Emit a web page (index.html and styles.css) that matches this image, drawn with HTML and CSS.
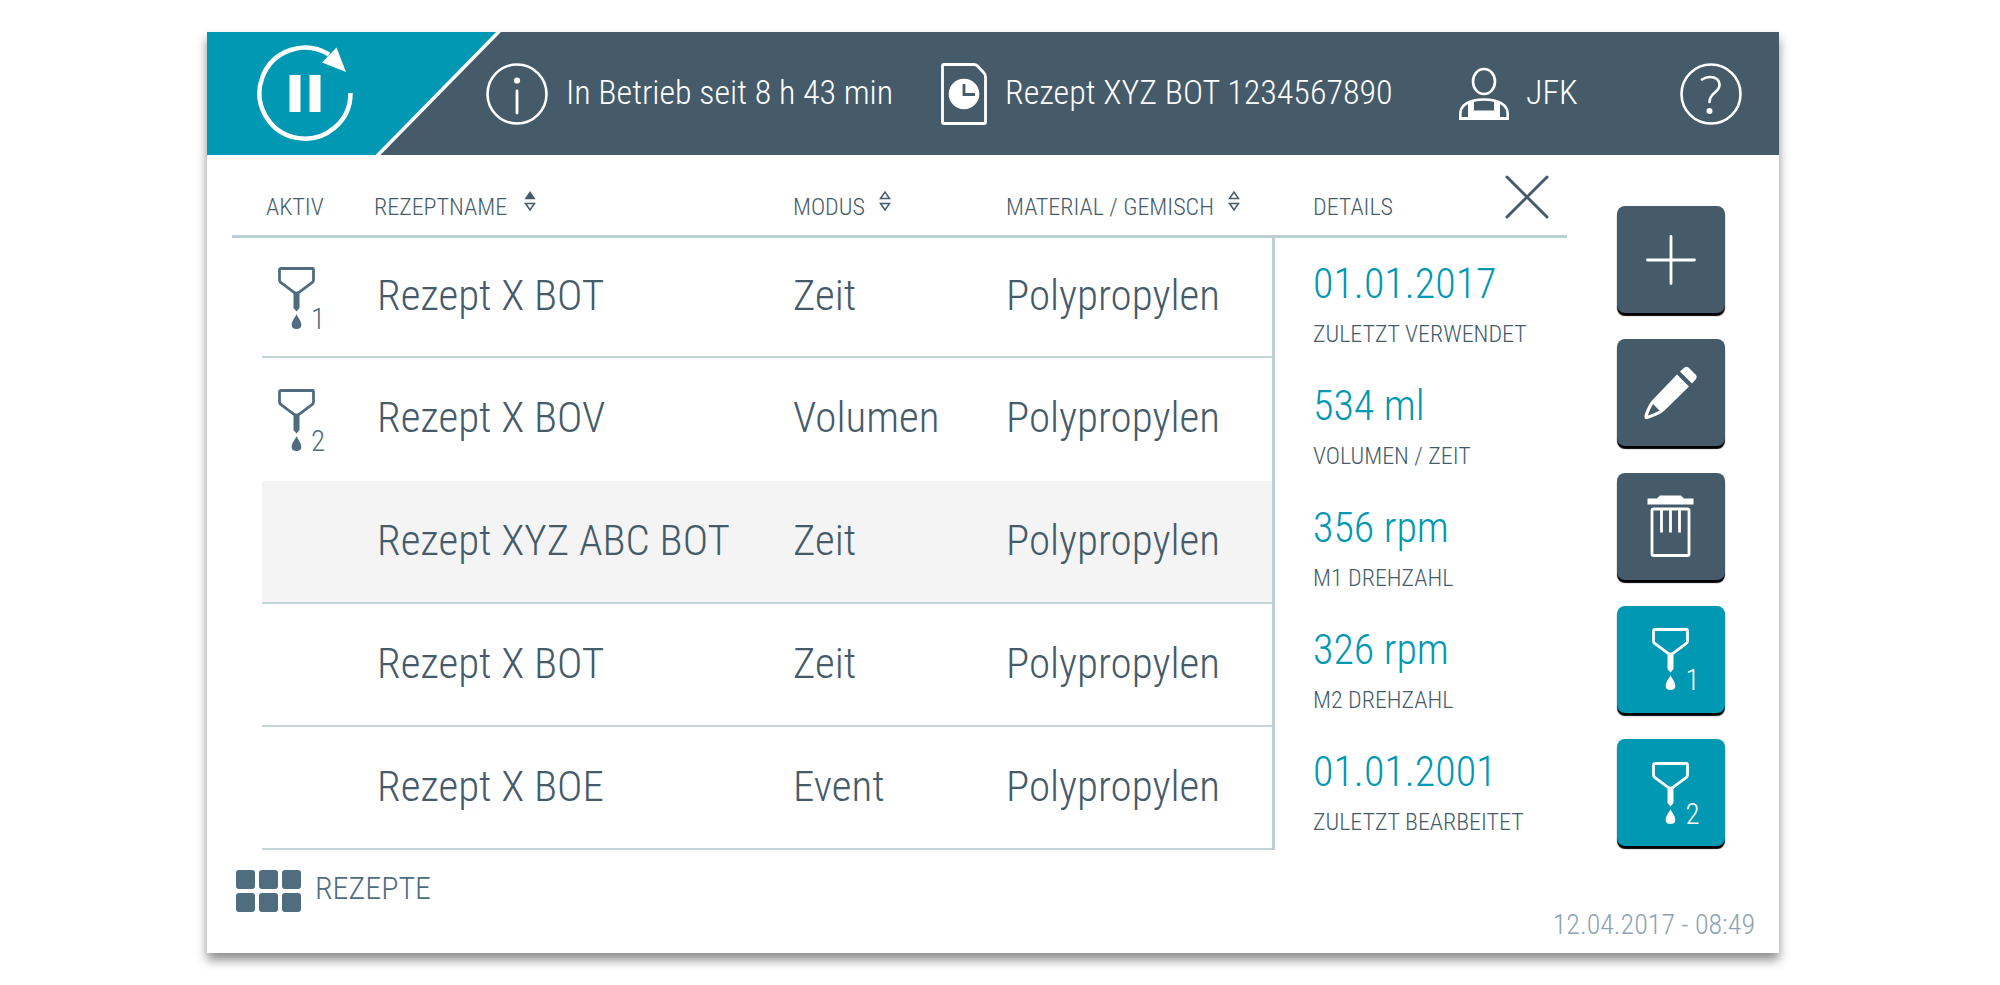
FILE: index.html
```html
<!DOCTYPE html>
<html lang="de">
<head>
<meta charset="utf-8">
<title>Rezepte</title>
<link rel="stylesheet" href="styles.css">
</head>
<body>
<svg class="defs" aria-hidden="true">
  <symbol id="funnel" viewBox="0 0 38 62">
    <path d="M3.500 1.500H34.500Q35.500 1.500 35.500 2.500V13Q35.500 14.500 34.300 15.500L21 25.300Q18.500 26.800 16 25.300L2.700 15.500Q1.500 14.500 1.500 13V3Q1.500 1.500 3.500 1.500Z" fill="none" stroke="currentColor" stroke-width="2.800"/>
    <path d="M15.500 25H21.500V41L18.500 44.500L15.500 41Z" fill="currentColor"/>
    <path d="M18.500 47C20 51 23.300 53.500 23.300 58Q23.300 62 18.500 62T13.700 58C13.700 53.500 17 51 18.500 47Z" fill="currentColor"/>
  </symbol>
  <symbol id="sort" viewBox="0 0 12 22">
    <path d="M1.500 8.500L6 2L10.500 8.500Z" fill="none" stroke="currentColor" stroke-width="1.500"/>
    <path d="M1.500 13.500L6 20L10.500 13.500Z" fill="none" stroke="currentColor" stroke-width="1.500"/>
  </symbol>
  <symbol id="sort-up" viewBox="0 0 12 22">
    <path d="M0.500 9.300L6 1L11.500 9.300Z" fill="currentColor"/>
    <path d="M1.500 13.500L6 20L10.500 13.500Z" fill="none" stroke="currentColor" stroke-width="1.500"/>
  </symbol>
</svg>
<div class="panel">
  <header class="topbar">
    <button class="run" aria-label="Pause">
      <svg class="run-shape" viewBox="0 0 294 123"><path d="M0 0H290L169 123H0Z" fill="#0098b2"/><path d="M292.500 -1L170 124" stroke="#fff" stroke-width="3.500"/></svg>
      <svg class="run-icon" viewBox="0 0 96 96"><path d="M93.500 48A45.500 45.500 0 1 1 72 9.500" fill="none" stroke="#fff" stroke-width="4.500"/><path d="M79.500 2.500L89 27L65 17.500Z" fill="#fff"/><path d="M32.500 30h11v37h-11zM52.500 30h11v37h-11z" fill="#fff"/></svg>
    </button>
    <div class="status status-time">
      <svg width="62" height="62" viewBox="0 0 62 62"><circle cx="31" cy="31" r="29.500" fill="none" stroke="#fff" stroke-width="2.600"/><circle cx="31" cy="17.500" r="3.100" fill="#fff"/><path d="M31 28V50" stroke="#fff" stroke-width="2.800" stroke-linecap="round"/></svg>
      <span>In Betrieb seit 8 h 43 min</span>
    </div>
    <div class="status status-recipe">
      <svg width="46" height="62" viewBox="0 0 46 62"><path d="M3 1.500H33Q35 1.500 36.500 3L43 10Q44.500 11.500 44.500 14V59Q44.500 60.500 43 60.500H3Q1.500 60.500 1.500 59V3Q1.500 1.500 3 1.500Z" fill="none" stroke="#fff" stroke-width="2.800"/><circle cx="23" cy="31" r="15.300" fill="#fff"/><path d="M23 21V31.500H34" fill="none" stroke="#455b69" stroke-width="2.800"/></svg>
      <span>Rezept XYZ BOT 1234567890</span>
    </div>
    <div class="status status-user">
      <svg width="50" height="54" viewBox="0 0 50 54"><ellipse cx="25" cy="14.500" rx="11" ry="12.500" fill="none" stroke="#fff" stroke-width="2.600"/><path d="M1.300 51.700V47C1.300 38 10 32.500 25 32.500S48.700 38 48.700 47V51.700Z" fill="none" stroke="#fff" stroke-width="2.600"/><path d="M9 35.500L15 33V43.500H35V33L41 35.500V50H47V53H3V50H9Z" fill="#fff"/></svg>
      <span>JFK</span>
    </div>
    <button class="help" aria-label="Hilfe">
      <svg width="62" height="62" viewBox="0 0 62 62"><circle cx="31" cy="31" r="29.500" fill="none" stroke="#fff" stroke-width="2.600"/><path d="M22 16.500Q25.500 14 30 14C36 14 39.500 17 39.500 22C39.500 30 29.500 29 29.500 39" fill="none" stroke="#fff" stroke-width="2.600" stroke-linecap="round"/><circle cx="29.500" cy="48" r="3" fill="#fff"/></svg>
    </button>
  </header>

  <main class="content">
    <table class="recipes">
      <colgroup><col class="c-active"><col class="c-name"><col class="c-mode"><col class="c-material"></colgroup>
      <thead>
        <tr>
          <th>AKTIV</th>
          <th><button class="sort sort-name">REZEPTNAME <svg><use href="#sort-up"/></svg></button></th>
          <th><button class="sort">MODUS <svg><use href="#sort"/></svg></button></th>
          <th><button class="sort">MATERIAL / GEMISCH <svg><use href="#sort"/></svg></button></th>
        </tr>
      </thead>
      <tbody>
        <tr><td><span class="pump"><svg><use href="#funnel"/></svg><span>1</span></span></td><td>Rezept X BOT</td><td>Zeit</td><td>Polypropylen</td></tr>
        <tr><td><span class="pump"><svg><use href="#funnel"/></svg><span>2</span></span></td><td>Rezept X BOV</td><td>Volumen</td><td>Polypropylen</td></tr>
        <tr class="selected"><td></td><td>Rezept XYZ ABC BOT</td><td>Zeit</td><td>Polypropylen</td></tr>
        <tr><td></td><td>Rezept X BOT</td><td>Zeit</td><td>Polypropylen</td></tr>
        <tr><td></td><td>Rezept X BOE</td><td>Event</td><td>Polypropylen</td></tr>
      </tbody>
    </table>

    <section class="details">
      <div class="details-head">
        <h2>DETAILS</h2>
        <button class="close" aria-label="Schließen"><svg width="44" height="44" viewBox="0 0 44 44"><path d="M2 2L42 42M42 2L2 42" stroke="#455b69" stroke-width="3" stroke-linecap="round"/></svg></button>
      </div>
      <dl>
        <div><dd>01.01.2017</dd><dt>ZULETZT VERWENDET</dt></div>
        <div><dd>534 ml</dd><dt>VOLUMEN / ZEIT</dt></div>
        <div><dd>356 rpm</dd><dt>M1 DREHZAHL</dt></div>
        <div><dd>326 rpm</dd><dt>M2 DREHZAHL</dt></div>
        <div><dd>01.01.2001</dd><dt>ZULETZT BEARBEITET</dt></div>
      </dl>
    </section>

    <nav class="actions">
      <button aria-label="Hinzufügen"><svg width="50" height="50" viewBox="0 0 50 50"><path d="M25 1.500V48.500M1.500 25H48.500" stroke="#fff" stroke-width="2.800" stroke-linecap="round"/></svg></button>
      <button aria-label="Bearbeiten"><svg width="54" height="54" viewBox="0 0 54 54"><path d="M36 5.500L40.500 1.500Q42.500 0 44.500 1.500L52 9Q53.500 11 52 13L48 17.500ZM33 8.500L45 20.500L20.500 44.500C17 48 7 52 3 53Q0 53.500 0.500 49.500C1.500 46 4.500 38.500 8 34.500ZM9 38Q5.500 44 3.800 49.500Q9 48 15.500 44.500Z" fill="#fff" fill-rule="evenodd"/></svg></button>
      <button aria-label="Löschen"><svg width="48" height="62" viewBox="0 0 48 62"><path d="M0.500 3.500H10L13 0.500H34L37 3.500H46.500V9.500H0.500Z" fill="#fff"/><rect x="5" y="14" width="37" height="46.500" rx="1.500" fill="none" stroke="#fff" stroke-width="2.800"/><path d="M14.500 14V37.500M23.500 14V37.500M32.500 14V37.500" stroke="#fff" stroke-width="2.800"/></svg></button>
      <button class="primary" aria-label="Pumpe 1"><span class="pump"><svg><use href="#funnel"/></svg><span>1</span></span></button>
      <button class="primary" aria-label="Pumpe 2"><span class="pump"><svg><use href="#funnel"/></svg><span>2</span></span></button>
    </nav>
  </main>

  <footer class="bottombar">
    <button class="menu">
      <svg width="65" height="42" viewBox="0 0 65 42" fill="#506d80"><rect width="19" height="19" rx="3"/><rect x="23" width="19" height="19" rx="3"/><rect x="46" width="19" height="19" rx="3"/><rect y="23" width="19" height="19" rx="3"/><rect x="23" y="23" width="19" height="19" rx="3"/><rect x="46" y="23" width="19" height="19" rx="3"/></svg>
      <span>REZEPTE</span>
    </button>
    <time datetime="2017-04-12T08:49">12.04.2017 - 08:49</time>
  </footer>
</div>
</body>
</html>
```
FILE: styles.css
```css
* { box-sizing: border-box; }
body {
  margin: 0;
  padding: 32px 221px 32px 207px;
  background: #fff;
  color: #455b69;
  font-family: "Roboto Condensed", "Liberation Sans Narrow", Roboto, sans-serif;
  font-weight: 300;
}
svg { display: block; flex: none; }
button {
  margin: 0;
  padding: 0;
  border: 0;
  background: none;
  color: inherit;
  font: inherit;
  cursor: pointer;
}
.defs { position: absolute; width: 0; height: 0; }
.panel { background: #fff; box-shadow: 0 7px 10px rgba(0, 0, 0, 0.45); }

.topbar {
  display: flex;
  align-items: center;
  height: 123px;
  background: #455b69;
  color: #fff;
}
.run { position: relative; width: 294px; height: 123px; }
.run-shape { width: 294px; height: 123px; }
.run-icon { position: absolute; left: 50px; top: 13px; width: 96px; height: 96px; }
.status { display: flex; align-items: center; font-size: 34px; line-height: 40px; white-space: nowrap; }
.status span { padding-bottom: 4px; }
.status-time { gap: 18px; margin-left: -15px; width: 455px; }
.status-recipe { gap: 18px; width: 518px; }
.status-user { gap: 17px; }
.help { margin-left: auto; margin-right: 37px; }

.content { display: flex; }
.recipes {
  flex: 1;
  margin-left: 25px;
  border-collapse: separate;
  border-spacing: 0;
  table-layout: fixed;
}
.c-active { width: 142px; }
.c-name { width: 419px; }
.c-mode { width: 213px; }
th {
  height: 83px;
  padding: 23px 0 0;
  border-bottom: 3px solid #bbced1;
  font-size: 24px;
  font-weight: 300;
  line-height: 28px;
  text-align: left;
}
th:first-child { padding-left: 34px; }
.sort { display: flex; gap: 14px; }
.sort-name { gap: 17px; }
.sort svg { width: 12px; height: 22px; margin-top: -3px; }
td {
  height: 123px;
  padding: 0 0 6px;
  background: linear-gradient(#c3d5d8, #c3d5d8) 0 100% / 100% 2px no-repeat;
  font-size: 43px;
  line-height: 52px;
}
tbody tr:first-child td { height: 120px; }
td:first-child { padding: 0 0 0 46px; background-position: 30px 100%; }
td:nth-child(2) { padding-left: 3px; }
td:last-child { border-right: 3px solid #bbced1; }
.selected td { background: linear-gradient(#f4f4f4 121px, #c3d5d8 121px) 0 0 / 100% 100% no-repeat; }
.selected td:first-child { background-position: 30px 0; }
tr:nth-child(2) td { background: none; }
.pump { display: flex; align-items: flex-end; color: #506d80; font-size: 29px; line-height: 28px; }
.pump svg { width: 38px; height: 62px; }
.pump span { margin-left: -5px; margin-bottom: -4px; }

.details { width: 292px; }
.details-head {
  display: flex;
  justify-content: space-between;
  height: 83px;
  padding: 20px 18px 0 38px;
  border-bottom: 3px solid #bbced1;
}
h2 { margin: 18px 0 0; font-size: 24px; font-weight: 300; line-height: 28px; }
.close { align-self: flex-start; }
dl { margin: 0; padding: 18px 0 0 38px; }
dl div { height: 122px; }
dl div:last-child { height: auto; }
dd { margin: 0; color: #0098b2; font-size: 42px; line-height: 56px; }
dt { font-size: 24px; line-height: 44px; white-space: nowrap; }

.actions {
  display: flex;
  flex-direction: column;
  justify-content: space-between;
  width: 108px;
  margin: 51px 54px 4px 50px;
}
.actions button {
  display: flex;
  align-items: center;
  justify-content: center;
  height: 107px;
  border-radius: 8px;
  background: #455b69;
  box-shadow: 0 3px 1px #000;
}
.actions .primary { background: #0098b2; }
.actions .pump { margin-left: 10px; color: #fff; }

.bottombar {
  display: flex;
  justify-content: space-between;
  height: 103px;
  padding: 20px 24px 12px 29px;
}
.menu { display: flex; align-items: center; align-self: flex-start; gap: 14px; color: #506d80; font-size: 32px; line-height: 36px; }
.menu span { padding-bottom: 6px; }
time { align-self: flex-end; color: #8ea3b2; font-size: 28px; line-height: 32px; }
```
